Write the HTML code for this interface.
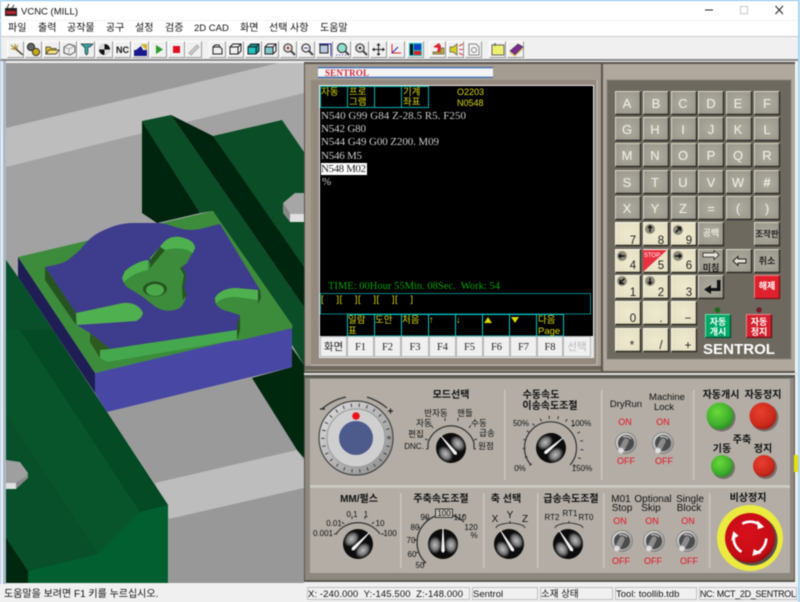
<!DOCTYPE html>
<html><head><meta charset="utf-8"><title>VCNC (MILL)</title>
<style>
html,body{margin:0;padding:0;width:800px;height:602px;overflow:hidden;background:#f0f0f0}
svg{display:block;filter:blur(.45px)}
text{font-family:"Liberation Sans","Noto Sans CJK KR",sans-serif;font-size:10px;fill:#111;white-space:pre}
.m{text-anchor:middle}
.b{font-weight:bold}
.y{fill:#d8d800;font-size:9.5px}
.g{font-family:"Liberation Serif","Noto Sans CJK KR",serif;font-size:11px;fill:#cccccc}
.f{font-family:"Liberation Serif","Noto Sans CJK KR",serif;font-size:10.5px;fill:#222;text-anchor:middle}
.k{fill:#f2f2ea;font-size:13px;text-anchor:middle}
.n{fill:#222;font-size:11.5px;text-anchor:middle}
.w{fill:#fff;font-size:9px;text-anchor:middle;font-weight:bold}
.d{fill:#222;font-size:9px;text-anchor:middle;font-weight:bold}
.r{fill:#e8101c;font-size:9px;text-anchor:middle}
.l{fill:#111;font-size:8.5px;text-anchor:middle}
.e{fill:#111;font-size:8px;text-anchor:middle}
.t{font-size:10px;fill:#111;text-anchor:middle;font-weight:bold}
.s{font-size:9.5px;fill:#111}
</style></head><body>
<svg width="800" height="602" viewBox="0 0 800 602" xmlns="http://www.w3.org/2000/svg">
<defs>
<clipPath id="sc"><rect x="6" y="63" width="298" height="520"/></clipPath>
<radialGradient id="gk" cx=".5" cy=".5" r=".7"><stop offset="0" stop-color="#aeab9f"/><stop offset="1" stop-color="#979488"/></radialGradient>
<radialGradient id="gc" cx=".5" cy=".5" r=".7"><stop offset="0" stop-color="#efeacf"/><stop offset="1" stop-color="#e2ddc0"/></radialGradient>
<radialGradient id="gg" cx=".4" cy=".35" r=".7"><stop offset="0" stop-color="#6ad93a"/><stop offset=".7" stop-color="#3fae2c"/><stop offset="1" stop-color="#258a22"/></radialGradient>
<radialGradient id="gr" cx=".4" cy=".35" r=".7"><stop offset="0" stop-color="#e84030"/><stop offset=".7" stop-color="#cc2a1c"/><stop offset="1" stop-color="#a01c14"/></radialGradient>
<radialGradient id="ge" cx=".45" cy=".4" r=".65"><stop offset="0" stop-color="#d8101c"/><stop offset=".8" stop-color="#c40c14"/><stop offset="1" stop-color="#7c0a0c"/></radialGradient>
<linearGradient id="gw" x1="0" y1="0" x2="1" y2="1"><stop offset="0" stop-color="#e0e0e0"/><stop offset="1" stop-color="#8c8c8c"/></linearGradient>
<radialGradient id="lobe"><stop offset="0" stop-color="#bcbcbc"/><stop offset=".6" stop-color="#787878"/><stop offset="1" stop-color="#141414"/></radialGradient>

<g id="kg"><rect width="26" height="24" fill="url(#gk)"/><path d="M.5 23.5V.5H25.5" stroke="#d8d5c9" fill="none"/><path d="M25.5 .5V23.5H.5" stroke="#2e2c26" stroke-width="1.4" fill="none"/></g>
<g id="kc"><rect width="26" height="24" fill="url(#gc)"/><path d="M.5 23.5V.5H25.5" stroke="#fbf9ec" fill="none"/><path d="M25.5 .5V23.5H.5" stroke="#2e2c26" stroke-width="1.4" fill="none"/></g>

<g id="knob"><circle r="15" fill="#0c0c0c"/><ellipse cx="-8" cy="1" rx="6.500" ry="8.500" fill="url(#lobe)"/><ellipse cx="8" cy="1" rx="6.500" ry="8.500" fill="url(#lobe)"/><path d="M-.4 -16L.4 -16L1.8 7L0 9L-1.8 7Z" fill="#f4f4f4"/></g>

<g id="tog"><circle r="10.5" fill="url(#gw)" stroke="#777" stroke-width=".7"/><circle r="8" fill="#4c4c4c"/><path d="M-3 -6A7 7 0 0 1 5 -4" stroke="#ccc" stroke-width="1.2" fill="none"/><path d="M0 -2L-4 6" stroke="#8c8c8c" stroke-width="5.5" stroke-linecap="round"/><circle cx="-5" cy="7.5" r="2.8" fill="#dedede"/></g>

<g id="btn"><rect width="17" height="17" fill="#f0f0f0"/><path d="M.5 16.5V.5H16.5" stroke="#fff" fill="none"/><path d="M16.5 .5V16.5H.5" stroke="#999" fill="none"/></g>
<g id="cube" fill="none" stroke="#222" stroke-width="1"><path d="M3 6H11V13H3ZM3 6L6 3H14V10L11 13M11 6L14 3"/></g>
<g id="lens" fill="none" stroke="#444" stroke-width="1.3"><circle cx="7" cy="7" r="4"/><path d="M10 10L14 14" stroke-width="2"/></g>
<g id="arr"><path d="M-7 -13A15 15 0 0 1 9 -12" fill="none" stroke="#fff" stroke-width="2.4"/><path d="M13 -10L6.5 -16L7 -8Z" fill="#fff"/></g>
</defs>

<!-- window chrome -->
<rect width="800" height="602" fill="#f0f0f0"/>
<rect width="800" height="36" fill="#fff"/>
<rect x="0" y="0" width="800" height="1" fill="#7cc4ee"/>
<rect x="0" y="0" width="1" height="602" fill="#9cc8e6"/>
<rect x="798" y="0" width="2" height="602" fill="#a8d4ee"/>
<rect x="0" y="20" width="798" height="1" fill="#f3f3f3"/>
<rect x="0" y="36" width="798" height="1" fill="#c8c8c8"/>
<rect x="0" y="59" width="798" height="2" fill="#8a8a8a"/>

<!-- title -->
<g><rect x="5" y="8" width="12" height="8" fill="#222"/><rect x="6" y="11" width="10" height="3" fill="#c02030"/><path d="M7 8L9 4M12 8L14 5" stroke="#333"/></g>
<text x="21" y="14.500" style="font-size:9.500px">VCNC (MILL)</text>
<path d="M705 10H713" stroke="#222"/>
<rect x="740.500" y="6.500" width="7" height="7" fill="none" stroke="#c8c8c8"/>
<path d="M775.500 6L783 14M783 6L775.500 14" stroke="#222" fill="none"/>

<!-- menu -->
<text x="8" y="31">파일</text>
<text x="38" y="31">출력</text>
<text x="67" y="31">공작물</text>
<text x="106" y="31">공구</text>
<text x="135" y="31">설정</text>
<text x="165" y="31">검증</text>
<text x="194" y="31" style="font-size:9.500px">2D CAD</text>
<text x="240" y="31">화면</text>
<text x="269" y="31">선택 사항</text>
<text x="320" y="31">도움말</text>

<!-- toolbar -->
<g id="tb">
<use href="#btn" x="7" y="41"/><path d="M11 45L21 54M15 44L15 49M11 49L18 48M18 45L14 50" stroke="#a08020" stroke-width="1" fill="none"/><path d="M16 49L23 55" stroke="#444" stroke-width="1.4"/>
<use href="#btn" x="25" y="41"/><circle cx="31" cy="47" r="3.6" fill="#666" stroke="#222"/><circle cx="36" cy="52" r="3.6" fill="#c8a810" stroke="#333"/>
<use href="#btn" x="43" y="41"/><path d="M46 54V47H50L51 48.500H56V54Z" fill="#e4c020" stroke="#333" stroke-width=".8"/><path d="M46 54L49 50H59L56 54Z" fill="#f4e080" stroke="#333" stroke-width=".8"/>
<use href="#btn" x="60" y="41"/><path d="M64 47L69 44L75 46V52L70 55L64 53Z" fill="#eee" stroke="#555"/><path d="M69 49L75 46M69 49L64 47M69 49V55" stroke="#999" stroke-width=".7" fill="none"/>
<use href="#btn" x="78" y="41"/><path d="M81 44H93L90 47H88V53L86.500 55L85 53V47H84Z" fill="#2aa8a8" stroke="#333" stroke-width=".7"/>
<use href="#btn" x="96" y="41"/><circle cx="104.500" cy="49.500" r="5.500" fill="#111"/><path d="M104.500 49.500H110A5.500 5.500 0 0 1 104.500 55ZM104.500 49.500H99A5.500 5.500 0 0 1 104.500 44Z" fill="#ddd"/>
<use href="#btn" x="114" y="41"/><text x="122.500" y="53" class="m b" style="font-size:9px;fill:#111">NC</text>
<use href="#btn" x="132" y="41"/><rect x="134" y="50" width="13" height="6" fill="#1a1a8c"/><path d="M141 44H147V50L144 48Z" fill="#d0b030"/><path d="M136 50L141 46L143 50Z" fill="#1a1a8c"/>
<use href="#btn" x="150" y="41"/><path d="M156 45L163 49.500L156 54Z" fill="#2a9a2a"/>
<use href="#btn" x="168" y="41"/><rect x="173" y="46" width="7" height="7" fill="#e01020"/>
<use href="#btn" x="185" y="41"/><path d="M189 53L197 45L199 47L191 55Z" fill="#ccc" stroke="#aaa"/>

<use href="#btn" x="209" y="41"/><path d="M213 47H220L222 49V54H213ZM213 47L215 45H219L220 47" fill="#eee" stroke="#222"/>
<use href="#btn" x="227" y="41"/><use href="#cube" x="227" y="41"/>
<use href="#btn" x="245" y="41"/><path d="M248 47H256V54H248Z" fill="#20c0c0"/><path d="M248 47L251 44H259V51L256 54V47Z" fill="#109090"/><use href="#cube" x="245" y="41"/>
<use href="#btn" x="262" y="41"/><path d="M265 47H273V54H265Z" fill="#80c8c8"/><use href="#cube" x="262" y="41"/>
<use href="#btn" x="280" y="41"/><use href="#lens" x="281" y="41"/><path d="M286 48H290M288 46V50" stroke="#a03030" fill="none"/>
<use href="#btn" x="298" y="41"/><use href="#lens" x="299" y="41"/><path d="M304 48H308" stroke="#404090" fill="none"/>
<use href="#btn" x="316" y="41"/><rect x="320" y="45" width="8" height="8" fill="#b8c8e0" stroke="#222"/><path d="M319 44H331V56" stroke="#2020a0" fill="none"/>
<use href="#btn" x="334" y="41"/><circle cx="342" cy="48" r="4.5" fill="#90e0d0" stroke="#444" stroke-width="1.3"/><path d="M345 51L349 55" stroke="#444" stroke-width="2"/><path d="M336 55H348" stroke="#3030c0" stroke-dasharray="1 2"/>
<use href="#btn" x="352" y="41"/><use href="#lens" x="353" y="41"/><circle cx="360" cy="48" r="1.500" fill="#444"/>
<use href="#btn" x="370" y="41"/><path d="M378.500 44V55M373 49.500H384" stroke="#222" fill="none"/><path d="M378.500 43L376.500 45.500H380.500ZM378.500 56L376.500 53.500H380.500ZM372 49.500L374.500 47.500V51.500ZM385 49.500L382.500 47.500V51.500Z" fill="#222"/>
<use href="#btn" x="388" y="41"/><path d="M392 44V53H401" stroke="#e02020" fill="none"/><path d="M392 53L398 47" stroke="#2020c0" fill="none"/>
<use href="#btn" x="407" y="41"/><rect x="409" y="43" width="13" height="13" fill="#10c8d0"/><rect x="410" y="44" width="3" height="11" fill="#111"/><rect x="414" y="44" width="7" height="6" fill="#1040c0"/><rect x="414" y="51" width="7" height="4" fill="#e02020"/>
<use href="#btn" x="429" y="41"/><path d="M433 54H444V48H441V52H433Z" fill="#c8b020" stroke="#555" stroke-width=".7"/><path d="M439 43L441 46L440 52H437L438 48L433 47Z" fill="#e02030"/>
<use href="#btn" x="447" y="41"/><path d="M450 47H453L457 44V55L453 52H450Z" fill="#d8d020" stroke="#555" stroke-width=".7"/><path d="M459 46L463 44M459 49.500H463M459 53L463 55" stroke="#e84040" fill="none"/>
<use href="#btn" x="465" y="41"/><path d="M469 44H476L479 47V55H469Z" fill="#f4f4f4" stroke="#888"/><circle cx="474" cy="50" r="2.500" fill="none" stroke="#888"/>
<use href="#btn" x="489" y="41"/><rect x="492" y="45" width="12" height="10" fill="#f0f070" stroke="#666"/><path d="M495 46V43" stroke="#666" stroke-width="1.4"/>
<use href="#btn" x="507" y="41"/><path d="M510 51L518 44L523 47L515 55Z" fill="#7a2a90" stroke="#333" stroke-width=".7"/><path d="M510 51V53L515 56.500L523 49V47L515 55Z" fill="#d0c060"/>
</g>

<!-- 3D scene -->
<rect x="3" y="61" width="3" height="523" fill="#a8b8c8"/>
<g clip-path="url(#sc)">
<rect x="6" y="63" width="298" height="520" fill="#a2a2a2"/>
<polygon points="6,63 278,63 6,128" fill="#9a9a9a"/>
<polygon points="6,128 278,63 304,63 304,93 6,167" fill="#bdbdbd"/>
<!-- right clamp -->
<polygon points="213,136 282,120 304,152 304,270" fill="#0a4d26"/>
<polygon points="171,115 213,136 304,267 304,307" fill="#00250f"/>
<polygon points="142,121 171,115 304,307 304,365 213,211 200,213" fill="#0a4d26"/>
<polygon points="142,121 142,213 157,223 200,213" fill="#00250f"/>
<!-- bolt right -->
<polygon points="283,203 295,193 304,193 304,222 290,214" fill="#a6a6a6"/>
<polygon points="283,203 290,214 290,222 283,213" fill="#888"/>
<polygon points="290,214 304,214 304,222 290,222" fill="#e0e0e0"/>
<!-- lower gray -->
<polygon points="107,412 252,378 297,450 156,484" fill="#9a9a9a"/>
<polygon points="155,483 297,450 304,461 304,488 169,519" fill="#bdbdbd"/>
<polygon points="169,519 304,488 304,583 169,583" fill="#989898"/>
<polygon points="252,378 292,367 292,348 304,365 304,458 297,450" fill="#00280f"/>
<!-- left clamp -->
<polygon points="6,260 18,277 53,330 168,505 168,583 6,583" fill="#07502a"/>
<polygon points="6,330 20,330 140,512 98,554 6,413" fill="#08552c"/>
<polygon points="20,330 53,330 168,505 140,512" fill="#044a24"/>
<polygon points="28,571 98,554 140,512 168,505 168,583 28,583" fill="#015f30"/>
<polygon points="6,538 28,571 28,583 6,583" fill="#00280f"/>
<polygon points="6,460 20,462 28,473 27,478 16,489 16,483 6,483" fill="#9f9f9f"/>
<polygon points="6,483 16,483 16,489 6,489" fill="#e0e0e0"/>
<polygon points="16,483 28,475 28,478 16,489" fill="#888"/>
<!-- workpiece -->
<polygon points="18,257 95,373 95,393 18,277" fill="#1e1e54"/>
<polygon points="95,373 292,325 292,367 107,412 95,393" fill="#4848a4"/>
<polygon points="18,257 213,211 293,326 95,373" fill="#3c8c3c"/>
<path d="M45 267C54 265 62 264 68 260C72 257 75 254 80 250C86 242 92 236 100 232C112 226 122 223 133 223H160C170 224 180 230 190 230C200 230 210 226 220 224L260 290L258 290L236 288C228 288 220 292 216 297C214 303 218 307 224 310L240 315L237 330L110 349L90 333L77 325L76 313Z" fill="#3e3c8c"/>
<!-- walls -->
<polygon points="45,267 76,313 76,325 45,280" fill="#265420"/>
<path d="M76 313L123 303C133 302 140 306 143 313C142 318 138 320 136 321L77 325Z" fill="#4fb04f"/>
<polygon points="90,333 90,342 100,358 110,349" fill="#2e5a1e"/>
<polygon points="100,350 110,349 237,330 237,340 107,362 100,358" fill="#45a84f"/>
<path d="M258 290L236 288C226 288 218 292 215 298C214 304 218 308 224 310L240 315L237 330L237 341L293 328L260 290Z" fill="#3c8c3c"/>
<path d="M258 290L236 288C226 288 218 292 215 298L216 303C222 298 228 297 236 297L258 300Z" fill="#4fb04f"/>
<polygon points="258,290 260,290 261,298 258,304" fill="#265420"/>
<polygon points="240,315 240,330 237,340 237,325" fill="#265420"/>
<!-- central pocket -->
<path d="M160 247C166 238 172 236 180 237C190 239 195 243 195 248L187 263L182 267C186 272 187 277 184 287C187 295 187 300 180 308C172 312 162 312 153 305L143 297L127 287C122 282 121 278 125 271C132 265 140 261 148 260L150 263Z" fill="#3c8c3c"/>
<path d="M160 247C166 238 172 236 180 237C190 239 195 243 195 248L193 253C186 248 176 247 165 250L150 263L150 258Z" fill="#4fb04f"/>
<path d="M125 271C132 265 140 261 148 260V270C138 272 130 276 124 282L122 278Z" fill="#4fb04f"/>
<path d="M150 260L160 247L165 250L150 268Z" fill="#265420"/>
<path d="M187 263L182 267C186 272 187 277 184 287L187 295L183 300L182 287L184 275L180 268Z" fill="#265420"/>
<ellipse cx="155" cy="289" rx="12" ry="7.500" fill="#265420"/>
<ellipse cx="155" cy="290" rx="9" ry="6" fill="#4aa84a"/>
</g>

<!-- status left -->
<rect x="0" y="584" width="305" height="18" fill="#f0f0f0"/>
<text x="4" y="597">도움말을 보려면 F1 키를 누르십시오.</text>

<!-- CNC screen panel -->
<rect x="304" y="62" width="298" height="311" fill="#5a544d"/>
<rect x="305" y="64" width="296" height="307" fill="#a59c91"/>
<rect x="311" y="80" width="286" height="285" fill="#93897e"/>
<path d="M311 365H597V80" fill="none" stroke="#c2bab0" stroke-width="1"/>
<rect x="305" y="366" width="296" height="4" fill="#6e675f"/>
<rect x="318" y="67" width="175" height="11" fill="#f4f4f4"/>
<rect x="318" y="67" width="175" height="1.300" fill="#3a6cb4"/>
<rect x="318" y="76.700" width="175" height="1.300" fill="#3a6cb4"/>
<text x="325" y="76" style="font-family:'Liberation Serif',serif;font-size:9px;font-weight:bold;fill:#d02838" textLength="44">SENTROL</text>
<rect x="319" y="85" width="275" height="273" fill="#e8e8e8"/>
<rect x="320" y="86" width="273" height="250" fill="#000"/>
<g fill="none" stroke="#00b0b0"><rect x="320.500" y="86.500" width="27" height="21"/><rect x="347.500" y="86.500" width="27" height="21"/><rect x="374.500" y="86.500" width="27" height="21"/><rect x="401.500" y="86.500" width="27" height="21"/></g>
<text x="321" y="95" class="y">자동</text>
<text x="349" y="95" class="y">프로</text><text x="349" y="105" class="y">그램</text>
<text x="403" y="95" class="y">기계</text><text x="403" y="105" class="y">좌표</text>
<text x="457" y="95" class="y" style="font-size:9px">O2203</text>
<text x="457" y="106" class="y" style="font-size:9px">N0548</text>
<text x="321" y="119" class="g" textLength="145">N540 G99 G84 Z-28.5 R5. F250</text>
<text x="321" y="132" class="g" textLength="45">N542 G80</text>
<text x="321" y="145" class="g" textLength="118">N544 G49 G00 Z200. M09</text>
<text x="321" y="159" class="g" textLength="41">N546 M5</text>
<rect x="321" y="163" width="46" height="12" fill="#fff"/>
<text x="321" y="172" class="g" style="fill:#222" textLength="45">N548 M02</text>
<text x="322" y="185" class="g">%</text>
<text x="328" y="289" style="font-family:'Liberation Serif',serif;font-size:10.500px;fill:#00a400" textLength="172">TIME: 00Hour 55Min. 08Sec.  Work: 54</text>
<rect x="320.500" y="293.500" width="270" height="20.500" fill="none" stroke="#008080"/>
<text x="321" y="302" class="y" textLength="92">[    ][    ][    ][    ][    ]</text>
<g fill="none" stroke="#00c8c8"><rect x="347.500" y="314.500" width="27" height="21.500"/><rect x="374.500" y="314.500" width="27" height="21.500"/><rect x="401.500" y="314.500" width="27" height="21.500"/><rect x="428.500" y="314.500" width="27" height="21.500"/><rect x="455.500" y="314.500" width="27" height="21.500"/><rect x="482.500" y="314.500" width="27" height="21.500"/><rect x="509.500" y="314.500" width="27" height="21.500"/><rect x="536.500" y="314.500" width="27" height="21.500"/></g>
<text x="348" y="323" class="y">일람</text><text x="348" y="334" class="y">표</text>
<text x="375" y="323" class="y">도안</text>
<text x="402" y="323" class="y">처음</text>
<text x="429" y="323" class="y">↑</text>
<text x="456" y="323" class="y">↓</text>
<path d="M484 323L488 317L492 323Z" fill="#d8d800"/>
<path d="M511 317L519 317L515 323Z" fill="#d8d800"/>
<text x="538" y="323" class="y">다음</text><text x="538" y="334" class="y">Page</text>
<g fill="#f0f0f0" stroke="#aaa" stroke-width=".8"><rect x="320.500" y="336.500" width="26" height="20"/><rect x="347.500" y="336.500" width="26" height="20"/><rect x="374.500" y="336.500" width="26" height="20"/><rect x="401.500" y="336.500" width="27" height="20"/><rect x="429.500" y="336.500" width="26" height="20"/><rect x="456.500" y="336.500" width="26" height="20"/><rect x="483.500" y="336.500" width="26" height="20"/><rect x="510.500" y="336.500" width="26" height="20"/><rect x="537.500" y="336.500" width="25" height="20"/><rect x="563.500" y="336.500" width="27" height="20"/></g>
<text x="333.500" y="350" class="f">화면</text>
<text x="360.500" y="350" class="f">F1</text>
<text x="387.500" y="350" class="f">F2</text>
<text x="415" y="350" class="f">F3</text>
<text x="442.500" y="350" class="f">F4</text>
<text x="469.500" y="350" class="f">F5</text>
<text x="496.500" y="350" class="f">F6</text>
<text x="523.500" y="350" class="f">F7</text>
<text x="550" y="350" class="f">F8</text>
<text x="577" y="350" class="f" style="fill:#b8b8b8">선택</text>

<!-- key panel -->
<rect x="602" y="62" width="194" height="311" fill="#5a544d"/>
<rect x="603" y="64" width="192" height="307" fill="#b0a89c"/>
<rect x="607" y="80" width="184" height="279" fill="#6d695e" stroke="#8a857a"/>
<rect x="795" y="62" width="3" height="312" fill="#f0f0f0"/>
<rect x="602" y="373" width="196" height="2" fill="#e0e0e0"/><rect x="304" y="373" width="298" height="2" fill="#e0e0e0"/>

<use href="#kg" x="615" y="91"/><use href="#kg" x="643" y="91"/><use href="#kg" x="671" y="91"/><use href="#kg" x="698" y="91"/><use href="#kg" x="726" y="91"/><use href="#kg" x="754" y="91"/>
<use href="#kg" x="615" y="117"/><use href="#kg" x="643" y="117"/><use href="#kg" x="671" y="117"/><use href="#kg" x="698" y="117"/><use href="#kg" x="726" y="117"/><use href="#kg" x="754" y="117"/>
<use href="#kg" x="615" y="143"/><use href="#kg" x="643" y="143"/><use href="#kg" x="671" y="143"/><use href="#kg" x="698" y="143"/><use href="#kg" x="726" y="143"/><use href="#kg" x="754" y="143"/>
<use href="#kg" x="615" y="170"/><use href="#kg" x="643" y="170"/><use href="#kg" x="671" y="170"/><use href="#kg" x="698" y="170"/><use href="#kg" x="726" y="170"/><use href="#kg" x="754" y="170"/>
<use href="#kg" x="615" y="196"/><use href="#kg" x="643" y="196"/><use href="#kg" x="671" y="196"/><use href="#kg" x="698" y="196"/><use href="#kg" x="726" y="196"/><use href="#kg" x="754" y="196"/>
<text x="627" y="108" class="k">A</text><text x="656" y="108" class="k">B</text><text x="683" y="108" class="k">C</text><text x="711" y="108" class="k">D</text><text x="738" y="108" class="k">E</text><text x="767" y="108" class="k">F</text>
<text x="627" y="134" class="k">G</text><text x="655" y="134" class="k">H</text><text x="683" y="134" class="k">I</text><text x="711" y="134" class="k">J</text><text x="738" y="134" class="k">K</text><text x="767" y="134" class="k">L</text>
<text x="627" y="160" class="k">M</text><text x="655" y="160" class="k">N</text><text x="683" y="160" class="k">O</text><text x="711" y="160" class="k">P</text><text x="738" y="160" class="k">Q</text><text x="767" y="160" class="k">R</text>
<text x="627" y="187" class="k">S</text><text x="655" y="187" class="k">T</text><text x="683" y="187" class="k">U</text><text x="711" y="187" class="k">V</text><text x="738" y="187" class="k">W</text><text x="767" y="187" class="k b">#</text>
<text x="627" y="213" class="k">X</text><text x="655" y="213" class="k">Y</text><text x="683" y="213" class="k">Z</text><text x="711" y="213" class="k">=</text><text x="738" y="213" class="k">(</text><text x="767" y="213" class="k">)</text>

<use href="#kc" x="615" y="222"/><use href="#kc" x="643" y="222"/><use href="#kc" x="671" y="222"/>
<use href="#kc" x="615" y="249"/><use href="#kc" x="643" y="249"/><use href="#kc" x="671" y="249"/>
<use href="#kc" x="615" y="275"/><use href="#kc" x="643" y="275"/><use href="#kc" x="671" y="275"/>
<use href="#kc" x="615" y="301"/><use href="#kc" x="643" y="301"/><use href="#kc" x="671" y="301"/>
<use href="#kc" x="615" y="328"/><use href="#kc" x="643" y="328"/><use href="#kc" x="671" y="328"/>
<use href="#kg" x="698" y="222"/><use href="#kg" x="698" y="249"/><use href="#kg" x="698" y="275"/><use href="#kg" x="726" y="249"/><use href="#kg" x="754" y="222"/><use href="#kg" x="754" y="249"/>
<!-- badges -->
<g fill="#8c8a7c"><circle cx="650" cy="229" r="5"/><circle cx="678" cy="230" r="5"/><circle cx="622" cy="256" r="5"/><circle cx="678" cy="256" r="5"/><circle cx="622" cy="281" r="5"/><circle cx="650" cy="281" r="5"/></g>
<g fill="none" stroke="#111" stroke-width="1.4"><path d="M650 232V226M648 228L650 226L652 228"/><path d="M675.500 232.500L680 228M677 227.500H680.500V231"/><path d="M625 256H619M621 254L619 256L621 258"/><path d="M675 256H681M679 254L681 256L679 258"/><path d="M624.500 278.500L620 283M620 279.500V283.500H624"/><path d="M650 278V284M648 282L650 284L652 282"/></g>
<polygon points="643,250 667,250 643,272" fill="#ea3040"/>
<text x="652" y="257" style="font-size:6px;fill:#fff" class="m">STOP</text>
<text x="633" y="244" class="n">7</text><text x="661" y="244" class="n">8</text><text x="689" y="244" class="n">9</text>
<text x="633" y="269" class="n">4</text><text x="661" y="269" class="n">5</text><text x="689" y="269" class="n">6</text>
<text x="633" y="296" class="n">1</text><text x="661" y="296" class="n">2</text><text x="689" y="296" class="n">3</text>
<text x="633" y="322" class="n">0</text><text x="661" y="322" class="n">.</text><text x="688" y="322" class="n">−</text>
<text x="632" y="349" class="n">*</text><text x="661" y="349" class="n">/</text><text x="688" y="349" class="n">+</text>
<text x="711" y="236" class="w" style="fill:#e8e6da">공백</text>
<path d="M703 253H714V250.500L719 255L714 259.500V257H703Z" fill="#e8e6da" stroke="#222" stroke-width=".8"/>
<text x="711" y="271" class="d">미침</text>
<path d="M717 280H720.500V291H711V294L704 289.500L711 285V288H717Z" fill="#111"/>
<path d="M733 261L738 256.500V259H746V263H738V265.500Z" fill="#e8e6da" stroke="#222" stroke-width="1"/>
<text x="767" y="237" class="d" style="font-size:8.500px">조작판</text>
<text x="767" y="264" class="d">취소</text>
<g><rect x="754" y="275" width="26" height="24" fill="#e0202c"/><path d="M754.500 298.500V275.500H779.500" stroke="#f08088" fill="none"/><path d="M779.500 275.500V298.500H754.500" stroke="#7c1018" stroke-width="1.300" fill="none"/></g>
<text x="767" y="289" class="w">해제</text>
<circle cx="717.500" cy="310" r="2.800" fill="#186c18"/>
<circle cx="759" cy="310" r="2.800" fill="#741c28"/>
<g><rect x="705" y="314" width="26" height="24" fill="#00a868"/><path d="M705.500 337.500V314.500H730.500" stroke="#70e0b0" fill="none"/><path d="M730.500 314.500V337.500H705.500" stroke="#045030" stroke-width="1.300" fill="none"/></g>
<text x="718" y="325" class="w">자동</text><text x="718" y="335" class="w">개시</text>
<g><rect x="746" y="314" width="26" height="24" fill="#d4202c"/><path d="M746.500 337.500V314.500H771.500" stroke="#f08088" fill="none"/><path d="M771.500 314.500V337.500H746.500" stroke="#6c1018" stroke-width="1.300" fill="none"/></g>
<text x="759" y="325" class="w">자동</text><text x="759" y="335" class="w">정지</text>
<text x="703" y="354" style="font-size:15px;font-weight:bold;fill:#fff" textLength="72" lengthAdjust="spacingAndGlyphs">SENTROL</text>

<!-- control panel -->
<rect x="304" y="375" width="491" height="207" fill="#5a5650"/>
<rect x="305" y="378" width="489" height="202" fill="#8d887f"/>
<rect x="310" y="379" width="480" height="194" fill="#b3ada6"/>
<rect x="310" y="485" width="480" height="3" fill="#ccc8c2"/>
<rect x="795" y="375" width="3" height="209" fill="#f0f0f0"/>
<rect x="794" y="455" width="4" height="17" fill="#e8e000"/>
<g fill="#c9c5be"><rect x="504" y="390" width="1.500" height="90"/><rect x="601" y="390" width="1.500" height="90"/><rect x="693" y="390" width="1.500" height="90"/><rect x="400" y="493" width="1.500" height="75"/><rect x="483" y="493" width="1.500" height="75"/><rect x="537" y="493" width="1.500" height="75"/><rect x="603" y="493" width="1.500" height="75"/><rect x="709" y="493" width="1.500" height="75"/></g>

<!-- handwheel -->
<circle cx="356" cy="438" r="37" fill="url(#gw)" stroke="#444" stroke-width="1.200"/>
<circle cx="356" cy="438" r="33" fill="none" stroke="#444" stroke-width="3.500" stroke-dasharray="1 6.900"/>
<circle cx="356" cy="438" r="29" fill="#cfcfcf" stroke="#999"/>
<circle cx="356" cy="438" r="17" fill="#4c5a8c"/>
<circle cx="356" cy="416" r="3.800" fill="#f01018"/>
<path d="M322 409Q332 400 346 397M367 397Q379 401 387 408" fill="none" stroke="#333" stroke-width="1.300"/>
<path d="M320 409H325M388 411H393M390.500 408.500V413.500" stroke="#222" stroke-width="1.200" fill="none"/>

<!-- mode -->
<text x="451" y="398" class="t">모드선택</text>
<path d="M428 449H428V443A24 24 0 0 1 474 443V449" fill="none" stroke="#333" stroke-width="1.200"/>
<path d="M428 449H426M474 449H476M428 440L425 439M474 440L477 439M433 428L431 425M469 428L471 425M445 421V418M458 421V418" stroke="#333" fill="none"/>
<use href="#knob" transform="translate(451 448) rotate(-40)"/>
<text x="414" y="449" class="e">DNC.</text>
<text x="416" y="437" class="l">편집</text>
<text x="424" y="426" class="l">자동</text>
<text x="436" y="416" class="l">반자동</text>
<text x="465" y="416" class="l">핸들</text>
<text x="479" y="426" class="l">수동</text>
<text x="487" y="436" class="l">급송</text>
<text x="486" y="449" class="l">원점</text>

<!-- feed -->
<text x="541" y="398" class="t">수동속도</text>
<text x="550" y="409" class="t">이송속도조절</text>
<path d="M531 465A26 26 0 1 1 570 465" fill="none" stroke="#333" stroke-width="1.200"/>
<path d="M531 465A29 29 0 1 1 571 469" fill="none" stroke="#333" stroke-width="3" stroke-dasharray="1 7.800"/>
<use href="#knob" transform="translate(551 448) rotate(50)"/>
<text x="521" y="426" class="e">50%</text>
<text x="581" y="426" class="e">100%</text>
<text x="520" y="471" class="e">0%</text>
<text x="582" y="471" class="e">150%</text>

<!-- dryrun -->
<text x="626" y="407" class="l" style="font-size:9.500px">DryRun</text>
<text x="667" y="400" class="l" style="font-size:9.500px">Machine</text>
<text x="664" y="410" class="l" style="font-size:9.500px">Lock</text>
<text x="625" y="425" class="r">ON</text><text x="663" y="425" class="r">ON</text>
<use href="#tog" x="626" y="443"/><use href="#tog" x="663" y="443"/>
<text x="626" y="464" class="r">OFF</text><text x="664" y="464" class="r">OFF</text>

<!-- buttons -->
<text x="721" y="398" class="t">자동개시</text>
<text x="763" y="398" class="t">자동정지</text>
<circle cx="721.500" cy="417.500" r="14" fill="#75706a"/>
<circle cx="764.500" cy="417.500" r="14" fill="#75706a"/>
<circle cx="720" cy="416" r="13.500" fill="url(#gg)"/>
<circle cx="763" cy="416" r="13.500" fill="url(#gr)"/>
<text x="742" y="443" class="t">주축</text>
<text x="722" y="452" class="t">기동</text>
<text x="763" y="452" class="t">정지</text>
<circle cx="723.500" cy="467.500" r="11.500" fill="#75706a"/>
<circle cx="765.500" cy="467.500" r="11.500" fill="#75706a"/>
<circle cx="722" cy="466" r="11" fill="url(#gg)"/>
<circle cx="764" cy="466" r="11" fill="url(#gr)"/>

<!-- row 2 -->
<text x="359" y="502" class="t">MM/펄스</text>
<path d="M336 534A27 27 0 0 1 380 534" fill="none" stroke="#333" stroke-width="1.200"/>
<path d="M334 534H337M381 534H384M344 524L342 522M372 524L374 522M352 519V517M365 519V517" stroke="#333" fill="none"/>
<use href="#knob" transform="translate(358 544) rotate(45)"/>
<text x="323" y="536" class="e">0.001</text>
<text x="334" y="526" class="e">0.01</text>
<text x="352" y="517" class="e">0.1</text>
<text x="366" y="517" class="e">1</text>
<text x="380" y="526" class="e">10</text>
<text x="390" y="536" class="e">100</text>

<text x="441" y="502" class="t">주축속도조절</text>
<path d="M426 563A26 26 0 0 1 464 522" fill="none" stroke="#333" stroke-width="1.300"/>
<path d="M424 564A29 29 0 0 1 468 520" fill="none" stroke="#333" stroke-width="3" stroke-dasharray="1 12"/>
<use href="#knob" transform="translate(443 544)"/>
<rect x="435.500" y="509" width="17" height="8.500" fill="#c4c0b8" stroke="#333"/>
<text x="444" y="516" class="e">100</text>
<text x="425" y="520" class="e">90</text>
<text x="460" y="520" class="e">110</text>
<text x="415" y="530" class="e">80</text>
<text x="471" y="530" class="e">120</text>
<text x="474" y="538" class="e">%</text>
<text x="411" y="543" class="e">70</text>
<text x="412" y="557" class="e">60</text>
<text x="420" y="568" class="e">50</text>

<text x="506" y="502" class="t">축 선택</text>
<text x="495" y="522" class="l" style="font-size:10px">X</text>
<text x="510" y="518" class="l" style="font-size:10px">Y</text>
<text x="525" y="522" class="l" style="font-size:10px">Z</text>
<path d="M497 526Q510 520 524 526" fill="none" stroke="#333"/>
<path d="M497 526L496 528M510 523V521M524 526L525 528" stroke="#333"/>
<use href="#knob" transform="translate(509 544) rotate(-32)"/>

<text x="571" y="502" class="t">급송속도조절</text>
<text x="552" y="520" class="e">RT2</text>
<text x="570" y="516" class="e">RT1</text>
<text x="586" y="520" class="e">RT0</text>
<path d="M556 526Q569 520 582 526" fill="none" stroke="#333"/>
<path d="M556 526L555 528M569 523V521M582 526L583 528" stroke="#333"/>
<use href="#knob" transform="translate(568 544) rotate(-33)"/>

<text x="621" y="502" class="l" style="font-size:10px">M01</text>
<text x="622" y="511" class="l" style="font-size:10px">Stop</text>
<text x="653" y="502" class="l" style="font-size:10px">Optional</text>
<text x="651" y="511" class="l" style="font-size:10px">Skip</text>
<text x="690" y="502" class="l" style="font-size:10px">Single</text>
<text x="689" y="511" class="l" style="font-size:10px">Block</text>
<text x="620" y="524" class="r">ON</text><text x="652" y="524" class="r">ON</text><text x="688" y="524" class="r">ON</text>
<use href="#tog" x="622" y="541"/><use href="#tog" x="654" y="541"/><use href="#tog" x="687" y="541"/>
<text x="621" y="564" class="r">OFF</text><text x="653" y="564" class="r">OFF</text><text x="689" y="564" class="r">OFF</text>

<text x="748" y="501" class="t">비상정지</text>
<circle cx="750" cy="538" r="33" fill="#eaea40"/>
<circle cx="752" cy="540" r="25.500" fill="#54504a"/>
<circle cx="750" cy="538" r="25" fill="url(#ge)"/>
<g transform="translate(750 538) scale(1.100)"><use href="#arr"/><use href="#arr" transform="rotate(120)"/><use href="#arr" transform="rotate(240)"/></g>

<!-- status bar -->
<rect x="304" y="582" width="494" height="20" fill="#f0f0f0"/>
<g fill="#f0f0f0" stroke="#c0c0c0"><rect x="307.500" y="587.500" width="162" height="12"/><rect x="472.500" y="587.500" width="65" height="12"/><rect x="540.500" y="587.500" width="72" height="12"/><rect x="615.500" y="587.500" width="81" height="12"/><rect x="699.500" y="587.500" width="97" height="12"/></g>
<text x="308" y="597" class="s" textLength="155">X: -240.000  Y:-145.500  Z:-148.000</text>
<text x="473" y="597" class="s">Sentrol</text>
<text x="541" y="597" class="s">소재 상태</text>
<text x="616" y="597" class="s">Tool: toollib.tdb</text>
<text x="700" y="597" class="s" style="font-size:9px" textLength="96">NC: MCT_2D_SENTROL</text>
</svg>
</body></html>
